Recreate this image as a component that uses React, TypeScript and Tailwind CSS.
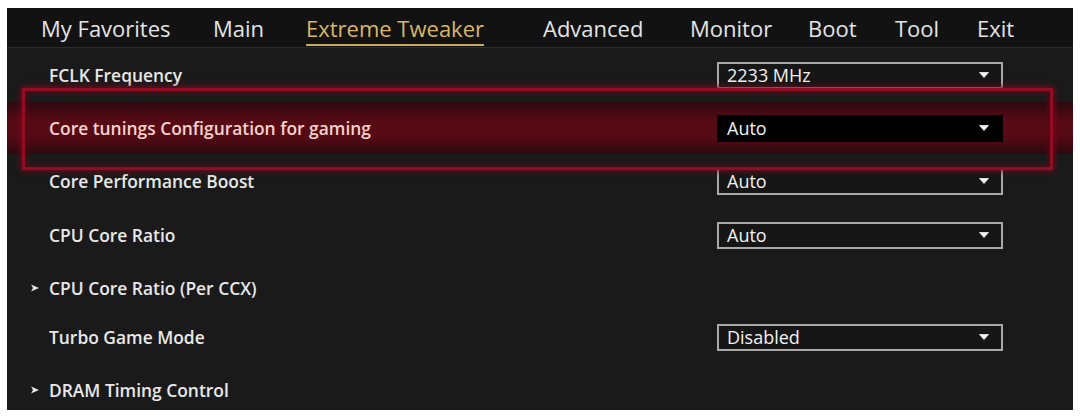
import React from "react";

type Row = {
  label: string;
  value?: string;
  sub?: boolean;
  active?: boolean;
  h: string;
};

const tabs: { label: string; w: string; active?: boolean }[] = [
  { label: "My Favorites", w: "w-[172px]" },
  { label: "Main", w: "w-[93px]" },
  { label: "Extreme Tweaker", w: "w-[237px]", active: true },
  { label: "Advanced", w: "w-[147px]" },
  { label: "Monitor", w: "w-[118px]" },
  { label: "Boot", w: "w-[87px]" },
  { label: "Tool", w: "w-[82px]" },
  { label: "Exit", w: "w-[60px]" },
];

const rows: Row[] = [
  { label: "FCLK Frequency", value: "2233 MHz", h: "h-[54px]" },
  { label: "Core tunings Configuration for gaming", value: "Auto", active: true, h: "h-[52px]" },
  { label: "Core Performance Boost", value: "Auto", h: "h-[54px]" },
  { label: "CPU Core Ratio", value: "Auto", h: "h-[54px]" },
  { label: "CPU Core Ratio (Per CCX)", sub: true, h: "h-[52px]" },
  { label: "Turbo Game Mode", value: "Disabled", h: "h-[46px]" },
  { label: "DRAM Timing Control", sub: true, h: "h-[50px] pt-[10px]" },
];

const Caret: React.FC = () => (
  <svg width="10" height="6" viewBox="0 0 10 6" className="shrink-0">
    <path d="M0.5 0.5 L9.5 0.5 L5 5.5 Z" fill="#f2f2f2" stroke="#f2f2f2" strokeWidth="0.8" strokeLinejoin="round" />
  </svg>
);

const Dropdown: React.FC<{ value: string; active?: boolean }> = ({ value, active }) => (
  <div
    className={
      active
        ? "flex h-[27px] w-[286px] items-center justify-between bg-black pl-[10px] pr-[14px]"
        : "flex h-[27px] w-[286px] items-center justify-between border-2 border-[#a9a9a9] bg-[#161616] pl-[8px] pr-[12px]"
    }
  >
    <span className="text-[18px] font-medium text-[#f2f2f2]">{value}</span>
    <Caret />
  </div>
);

const Chevron: React.FC = () => (
  <svg width="10" height="10" viewBox="0 0 10 10" className="mr-[9px]">
    <path d="M1 1.5 L9 5 L1 8.5 L3 5 Z" fill="#e6e6e6" />
  </svg>
);

const App: React.FC = () => {
  return (
    <div
      className="h-[418px] w-[1080px] bg-white pl-[7px] pt-[8px]"
      style={{ fontFamily: '"Open Sans", "Noto Sans", sans-serif' }}
    >
      <div className="relative h-[402px] w-[1066px] overflow-hidden bg-[#1a1a1a]">
        {/* top tab bar */}
        <div className="flex h-[40px] items-center border-b border-[#2c2c2c] bg-[#121212] pl-[34px] pt-[2px]">
          {tabs.map((t) => (
            <div key={t.label} className={`${t.w} shrink-0`}>
              <span
                className={
                  t.active
                    ? "border-b-2 border-[#c9a95a] pb-[1px] text-[22px] font-medium text-[#d9b766]"
                    : "text-[22px] font-medium text-[#e4e4e4]"
                }
              >
                {t.label}
              </span>
            </div>
          ))}
        </div>

        {/* setting rows */}
        <div className="flex flex-col">
          {rows.map((r) => (
            <div
              key={r.label}
              className={`${r.h} flex items-center justify-between pr-[70px] ${
                r.active
                  ? "bg-[linear-gradient(to_bottom,#2a0a0f_0%,#520a14_30%,#5a0b15_50%,#520a14_70%,#2a0a0f_100%)]"
                  : ""
              }`}
            >
              <div className={`flex items-center ${r.sub ? "pl-[23px]" : "pl-[42px]"}`}>
                {r.sub && <Chevron />}
                <span
                  className={`text-[17.4px] font-semibold ${
                    r.active ? "text-[#f3d3cc]" : "text-[#e8e8e8]"
                  }`}
                >
                  {r.label}
                </span>
              </div>
              {r.value && <Dropdown value={r.value} active={r.active} />}
            </div>
          ))}
        </div>

        {/* red selection frame drawn over the active row */}
        <div className="pointer-events-none absolute left-[15px] top-[80px] h-[82px] w-[1031px] border-[3px] border-[#920d24] shadow-[0_0_6px_1px_#7a0a1c,inset_0_0_6px_1px_#5a0a16]" />
      </div>
    </div>
  );
};

export default App;
